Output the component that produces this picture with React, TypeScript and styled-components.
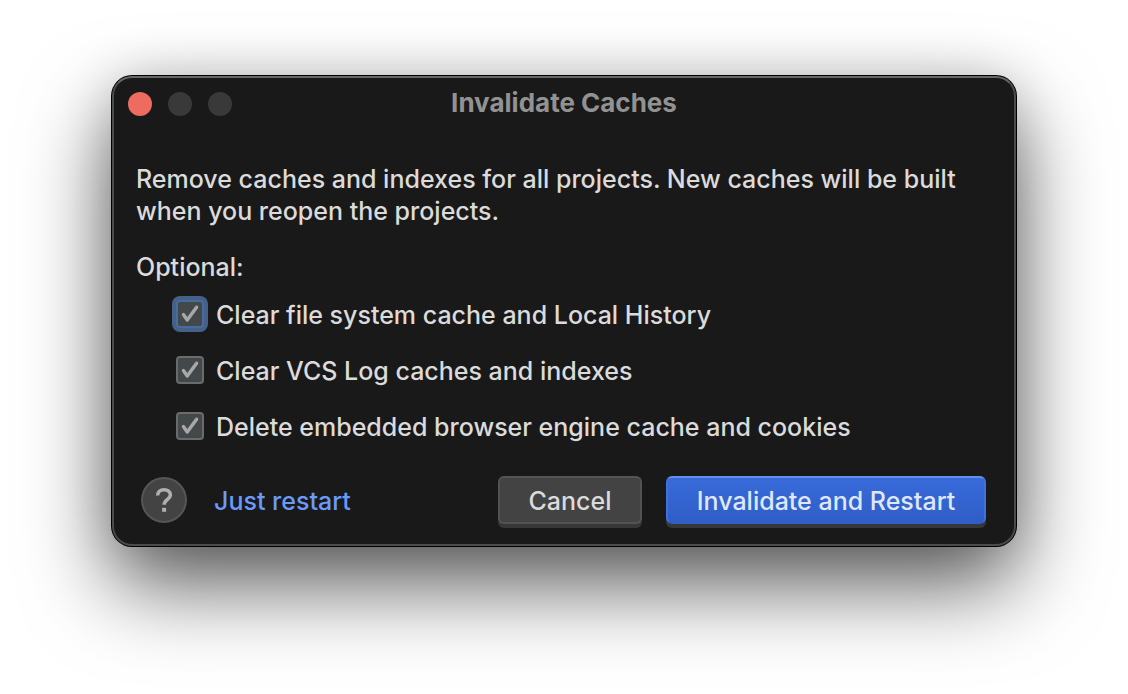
import React from "react";
import styled, { createGlobalStyle } from "styled-components";

const GlobalStyle = createGlobalStyle`
  *, *::before, *::after { box-sizing: border-box; }
  body {
    margin: 0;
    background: #ffffff;
    font-family: Inter, "Liberation Sans", sans-serif;
    font-size: 25px;
    font-weight: 500;
    line-height: 32px;
    color: #dbdbdb;
  }
  button, input { font: inherit; margin: 0; }
`;

const Page = styled.main`
  display: flex;
  justify-content: center;
  padding: 76px 112px 148px;
  overflow: hidden;
`;

const Dialog = styled.section`
  flex: 1;
  background: #191919;
  border: 2px solid #4b4b4b;
  border-top-color: #686868;
  border-radius: 20px;
  box-shadow:
    0 0 0 1px #000000,
    0 38px 86px rgba(0, 0, 0, 0.66),
    0 0 50px rgba(0, 0, 0, 0.12);
`;

const TitleBar = styled.header`
  display: grid;
  grid-template-columns: 1fr auto 1fr;
  align-items: center;
  height: 52px;
  padding: 0 14px;
`;

const WindowControls = styled.div`
  display: flex;
  gap: 16px;
`;

const WindowButton = styled.button<{ $color: string }>`
  width: 24px;
  height: 24px;
  padding: 0;
  border: 0;
  border-radius: 50%;
  background: ${(p) => p.$color};
`;

const Title = styled.h1`
  margin: 0;
  padding-bottom: 2px;
  font-size: 26px;
  line-height: 32px;
  font-weight: 700;
  color: #929292;
`;

const Body = styled.div`
  padding: 33px 22px 0;
`;

const Message = styled.p`
  margin: 0 0 24px;
`;

const Options = styled.fieldset`
  margin: 0;
  padding: 0;
  border: 0;
`;

const Legend = styled.legend`
  padding: 0;
  margin-bottom: 16px;
`;

const OptionList = styled.div`
  display: flex;
  flex-direction: column;
  gap: 24px;
  padding-left: 40px;
`;

const Option = styled.label`
  display: flex;
  align-items: center;
  gap: 12px;
`;

const CheckCell = styled.span`
  display: grid;
  flex: none;
  width: 28px;
  height: 30px;
  > * { grid-area: 1 / 1; }
`;

const CheckInput = styled.input<{ $focused: boolean }>`
  appearance: none;
  width: 28px;
  height: 28px;
  border: 2px solid ${(p) => (p.$focused ? "#466d9e" : "#6b6b6b")};
  border-radius: 4px;
  background: #43494a;
  outline: none;
  box-shadow: ${(p) => (p.$focused ? "0 0 0 4px #466188" : "none")};
  & + svg { visibility: hidden; }
  &:checked + svg { visibility: visible; }
`;

const CheckMark = styled.svg`
  pointer-events: none;
`;

const Footer = styled.footer`
  display: flex;
  align-items: center;
  gap: 24px;
  padding: 33px 28px 20px 27px;
`;

const HelpButton = styled.button`
  display: grid;
  place-items: center;
  width: 46px;
  height: 46px;
  padding: 0;
  border: 2px solid #565656;
  border-radius: 50%;
  background: #434343;
`;

const RestartLink = styled.a`
  flex: 1;
  margin-left: 3px;
  padding-top: 2px;
  color: #6b9bfa;
  text-decoration: none;
`;

const ActionButton = styled.button<{ $primary?: boolean }>`
  height: 48px;
  padding: 2px 24px 0;
  min-width: ${(p) => (p.$primary ? "320px" : "144px")};
  white-space: nowrap;
  border: 2px solid ${(p) => (p.$primary ? "#3f72df" : "#535353")};
  border-top-color: ${(p) => (p.$primary ? "#628fec" : "#555555")};
  border-bottom-color: ${(p) => (p.$primary ? "#315fc8" : "#535353")};
  border-radius: 6px;
  background: ${(p) =>
    p.$primary ? "linear-gradient(#386bdb, #305dc6) border-box" : "#434343"};
  color: ${(p) => (p.$primary ? "#dfe7fa" : "#dbdbdb")};
  box-shadow: 0 4px 0 #373737;
`;

const options = [
  "Clear file system cache and Local History",
  "Clear VCS Log caches and indexes",
  "Delete embedded browser engine cache and cookies",
];

export default function App() {
  return (
    <>
      <GlobalStyle />
      <Page>
        <Dialog role="dialog" aria-labelledby="dialog-title">
          <TitleBar>
            <WindowControls>
              <WindowButton $color="#ed6b5f" aria-label="Close" />
              <WindowButton $color="#393939" aria-label="Minimize" disabled />
              <WindowButton $color="#393939" aria-label="Zoom" disabled />
            </WindowControls>
            <Title id="dialog-title">Invalidate Caches</Title>
          </TitleBar>
          <Body>
            <Message>
              Remove caches and indexes for all projects. New caches will be
              built when you reopen the projects.
            </Message>
            <Options>
              <Legend>Optional:</Legend>
              <OptionList>
                {options.map((text, index) => (
                  <Option key={text}>
                    <CheckCell>
                      <CheckInput
                        type="checkbox"
                        defaultChecked
                        $focused={index === 0}
                      />
                      <CheckMark width="28" height="28" viewBox="0 0 28 28" aria-hidden="true">
                        <path
                          d="M7.4 14.6 11.2 20 20.6 7.2"
                          fill="none"
                          stroke="#a8a8a8"
                          strokeWidth="3.4"
                          strokeLinecap="round"
                          strokeLinejoin="round"
                        />
                      </CheckMark>
                    </CheckCell>
                    {text}
                  </Option>
                ))}
              </OptionList>
            </Options>
          </Body>
          <Footer>
            <HelpButton aria-label="Help">
              <svg width="20" height="26" viewBox="0 0 20 26" aria-hidden="true">
                <path
                  d="M3.6 8.6C3.6 4.8 6.2 2.7 10 2.7s6.4 2.1 6.4 5.3c0 4.4-6.2 4.5-6.2 9.7"
                  fill="none"
                  stroke="#afafaf"
                  strokeWidth="3.6"
                />
                <path d="M8.1 20.8h4v4h-4z" fill="#afafaf" />
              </svg>
            </HelpButton>
            <RestartLink href="#restart">Just restart</RestartLink>
            <ActionButton>Cancel</ActionButton>
            <ActionButton $primary>Invalidate and Restart</ActionButton>
          </Footer>
        </Dialog>
      </Page>
    </>
  );
}
